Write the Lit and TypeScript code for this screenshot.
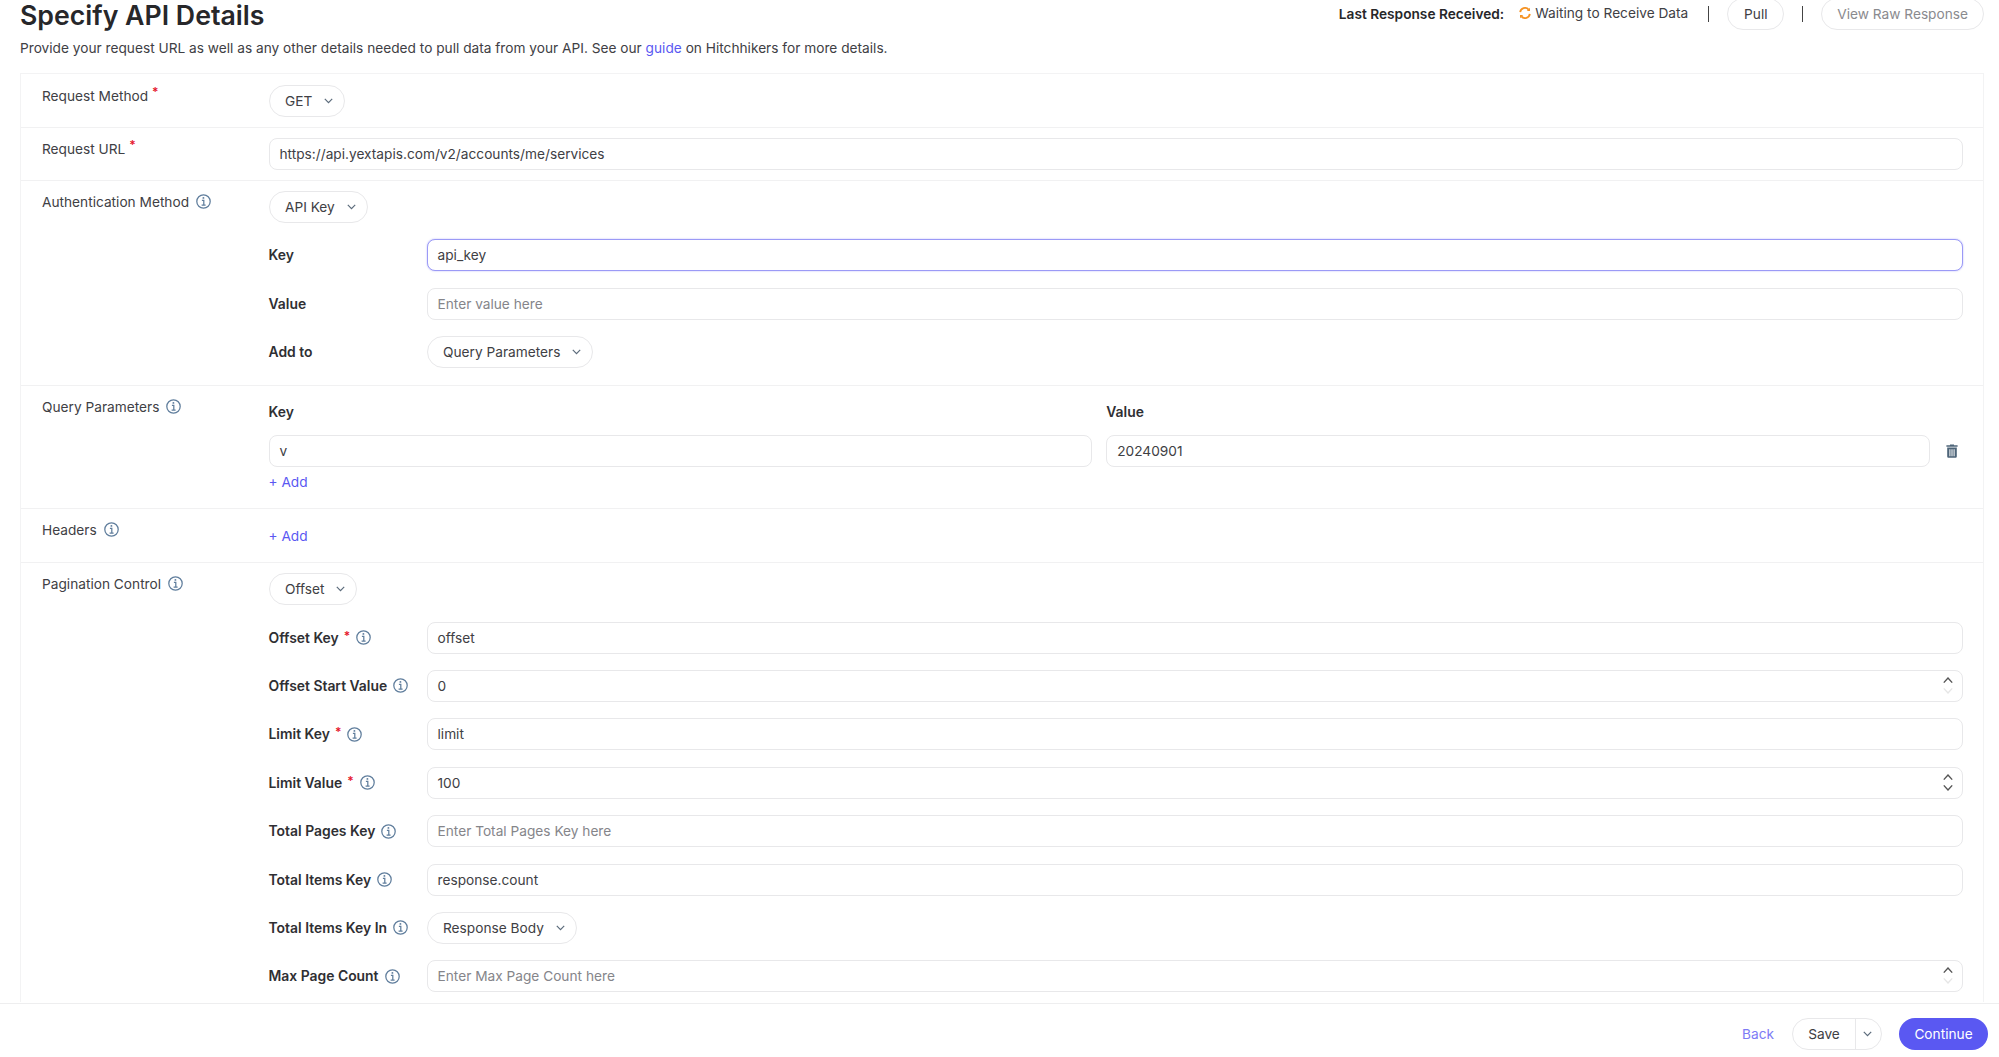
import { LitElement, html, css, svg } from "lit";
import { customElement } from "lit/decorators.js";

const info = html`<svg class="info" viewBox="0 0 15 15" width="15" height="15" fill="none" stroke="#5f7d9c"><circle cx="7.5" cy="7.5" r="6.7" stroke-width="1.25"/><path d="M5.9 6.3h1.9v4.7M5.6 11.1h4" stroke-width="1.25"/><circle cx="7.4" cy="3.9" r=".95" fill="#5f7d9c" stroke="none"/></svg>`;
const chev = html`<svg class="chev" viewBox="0 0 9 6" width="9" height="6" fill="none" stroke="#5b6b7b" stroke-width="1.2"><path d="M.8 .9l3.7 3.7L8.2 .9"/></svg>`;
const up = (c: string) => svg`<path d="M.8 5.6L5 1l4.2 4.6" stroke="${c}"/>`;
const spinner = (downColor: string) => html`<svg class="spin" viewBox="0 0 10 17" width="10" height="17" fill="none" stroke-width="1.4">${up("#555")}<path d="M.8 11.4L5 16l4.2-4.6" stroke="${downColor}"/></svg>`;

type Field = { label: string; req?: boolean; info?: boolean; value?: string; ph?: string; select?: string; spin?: string; focus?: boolean };

const authFields: Field[] = [
  { label: "Key", value: "api_key", focus: true },
  { label: "Value", ph: "Enter value here" },
  { label: "Add to", select: "Query Parameters" },
];
const pageFields: Field[] = [
  { label: "Offset Key", req: true, info: true, value: "offset" },
  { label: "Offset Start Value", info: true, value: "0", spin: "#e6e6e6" },
  { label: "Limit Key", req: true, info: true, value: "limit" },
  { label: "Limit Value", req: true, info: true, value: "100", spin: "#555" },
  { label: "Total Pages Key", info: true, ph: "Enter Total Pages Key here" },
  { label: "Total Items Key", info: true, value: "response.count" },
  { label: "Total Items Key In", info: true, select: "Response Body" },
  { label: "Max Page Count", info: true, ph: "Enter Max Page Count here", spin: "#e6e6e6" },
];

@customElement("app-root")
export class AppRoot extends LitElement {
  static styles = css`
    :host { display: flex; flex-direction: column; height: 1057px; overflow: hidden; background: #fff; color: #404044; font: 400 13.7px/20px Inter, "Liberation Sans", sans-serif; }
    * { box-sizing: border-box; }
    .main { flex: 1; min-height: 0; overflow: hidden; padding: 0 15px 0 20px; }
    .head { display: flex; justify-content: space-between; height: 28px; }
    h1 { margin: 0; font-size: 26.7px; line-height: 30px; font-weight: 600; color: #27272a; }
    .status { display: flex; align-items: center; height: 28px; white-space: nowrap; }
    .status b { font-weight: 600; color: #27272a; margin-right: 15px; }
    .status .wait { margin-left: 4px; position: relative; top: -1px; }
    .status .sync { position: relative; top: -1px; }
    .sep { width: 1px; height: 16px; background: #444; margin: 0 18px; }
    .sep.first { margin-left: 20px; }
    .btn { display: inline-flex; align-items: center; justify-content: center; height: 32px; border: 1px solid #e8e8ea; border-radius: 16px; padding: 0 15px; background: #fff; flex: none; }
    .btn.pull { width: 57px; padding: 0; }
    .btn.off { color: #8a8a8e; }
    .desc { margin: 10px 0 15px; height: 20px; }
    .desc a { color: #5a58f2; }
    .box { border: 1px solid #f3f3f4; border-bottom: 0; }
    .row { display: grid; grid-template-columns: 247.5px 1fr; padding: 10px 20px 10px 0; border-top: 1px solid #f1f1f2; }
    .row:first-child { border-top: 0; padding-top: 11px; }
    .rl { padding: 1px 0 0 21px; display: flex; align-items: flex-start; gap: 5px; height: 21px; }
    .rl .info { margin-top: 2px; margin-left: 2px; }
    .req { color: #e5162d; font-weight: 600; font-size: 12px; line-height: 14px; margin-left: -1px; position: relative; top: -1px; }
    .sel { display: inline-flex; align-items: center; gap: 12px; height: 32px; border: 1px solid #e8e8ea; border-radius: 16px; padding: 0 11px 0 15.5px; background: #fff; }
    .input { position: relative; display: flex; align-items: center; height: 32px; width: 100%; border: 1px solid #e8e8ea; border-radius: 8px; padding: 0 10px; background: #fff; }
    .input.focus { border-color: #9b9af6; box-shadow: 0 0 2px #b9b8fa; }
    .ph { color: #85858a; }
    .spin { position: absolute; right: 9px; top: 6px; }
    .fields { display: grid; grid-template-columns: 158px 1fr; row-gap: 16.4px; margin: 16.4px 0 0; align-items: center; }
    .fields.auth { margin-bottom: 7px; }
    .fl { display: flex; align-items: center; gap: 6px; font-weight: 600; font-size: 13.9px; color: #2f2f33; }
    .fl .req { margin: 0 0 0 -1px; top: -2px; }
    .fv { justify-self: start; }
    .fv.wide { justify-self: stretch; }
    .qgrid { display: grid; grid-template-columns: 1fr 1fr 19px; column-gap: 14px; row-gap: 7px; align-items: center; }
    .qh { height: 32px; display: flex; align-items: center; font-weight: 600; font-size: 13.9px; color: #2f2f33; }
    .trash { justify-self: end; margin-right: 5px; }
    .add { display: block; color: #5a58f2; margin: 5px 0 6px; height: 20px; }
    .add.solo { margin-top: 7px; }
    .foot { flex: none; height: 54px; border-top: 1px solid #eeeeef; display: flex; align-items: flex-start; justify-content: flex-end; padding: 14px 11px 0 0; }
    .back { color: #7d7bf5; margin-right: 18px; height: 32px; display: flex; align-items: center; }
    .split { display: flex; height: 32px; border: 1px solid #e8e8ea; border-radius: 16px; margin-right: 17px; }
    .split span { display: flex; align-items: center; justify-content: center; }
    .split .s1 { width: 63px; border-right: 1px solid #e8e8ea; }
    .split .s2 { width: 25px; padding-right: 3px; }
    .cont { display: flex; align-items: center; justify-content: center; width: 89px; height: 32px; border-radius: 16px; background: #5a58f2; color: #fff; }
  `;

  private field(f: Field) {
    let control;
    if (f.select) {
      control = html`<div class="sel fv">${f.select}${chev}</div>`;
    } else {
      control = html`<div class="input fv wide ${f.focus ? "focus" : ""}">
        ${f.value !== undefined ? f.value : html`<span class="ph">${f.ph}</span>`}
        ${f.spin ? spinner(f.spin) : ""}
      </div>`;
    }
    return html`<div class="fl"><span>${f.label}</span>${f.req ? html`<span class="req">*</span>` : ""}${f.info ? info : ""}</div>${control}`;
  }

  render() {
    return html`
      <div class="main">
        <div class="head">
          <h1>Specify API Details</h1>
          <div class="status">
            <b>Last Response Received:</b>
            <svg class="sync" viewBox="0 0 12 12" width="12" height="12" fill="none" stroke="#f59324" stroke-width="1.8">
              <path d="M1.2 5.2A4.8 4.8 0 0 1 9.6 2.6"/><path d="M10.8 6.8A4.8 4.8 0 0 1 2.4 9.4"/>
              <path d="M11 .8v3.2H7.8z" fill="#f59324" stroke="none"/><path d="M1 11.2V8h3.2z" fill="#f59324" stroke="none"/>
            </svg>
            <span class="wait">Waiting to Receive Data</span>
            <span class="sep first"></span>
            <span class="btn pull">Pull</span>
            <span class="sep"></span>
            <span class="btn off">View Raw Response</span>
          </div>
        </div>
        <div class="desc">Provide your request URL as well as any other details needed to pull data from your API. See our <a>guide</a> on Hitchhikers for more details.</div>
        <div class="box">
          <div class="row">
            <div class="rl"><span>Request Method</span><span class="req">*</span></div>
            <div><div class="sel">GET${chev}</div></div>
          </div>
          <div class="row">
            <div class="rl"><span>Request URL</span><span class="req">*</span></div>
            <div class="input">https://api.yextapis.com/v2/accounts/me/services</div>
          </div>
          <div class="row">
            <div class="rl"><span>Authentication Method</span>${info}</div>
            <div>
              <div class="sel">API Key${chev}</div>
              <div class="fields auth">${authFields.map((f) => this.field(f))}</div>
            </div>
          </div>
          <div class="row">
            <div class="rl"><span>Query Parameters</span>${info}</div>
            <div>
              <div class="qgrid">
                <div class="qh">Key</div><div class="qh">Value</div><div></div>
                <div class="input">v</div><div class="input">20240901</div>
                <svg class="trash" viewBox="0 0 12 14" width="12" height="14"><path d="M4 1.2V.4h4v.8h3.6v1.6H.4V1.2z" fill="#4d6478"/><path fill-rule="evenodd" d="M1.2 3.6h9.6V12.6a1.2 1.2 0 0 1-1.2 1.2H2.4a1.2 1.2 0 0 1-1.2-1.2zM3.4 5.2v7h1v-7zM5.5 5.2v7h1v-7zM7.6 5.2v7h1v-7z" fill="#4d6478"/></svg>
              </div>
              <a class="add">+ Add</a>
            </div>
          </div>
          <div class="row">
            <div class="rl"><span>Headers</span>${info}</div>
            <div><a class="add solo">+ Add</a></div>
          </div>
          <div class="row">
            <div class="rl"><span>Pagination Control</span>${info}</div>
            <div>
              <div class="sel">Offset${chev}</div>
              <div class="fields">${pageFields.map((f) => this.field(f))}</div>
            </div>
          </div>
        </div>
      </div>
      <div class="foot">
        <a class="back">Back</a>
        <div class="split"><span class="s1">Save</span><span class="s2">${chev}</span></div>
        <div class="cont">Continue</div>
      </div>
    `;
  }
}
